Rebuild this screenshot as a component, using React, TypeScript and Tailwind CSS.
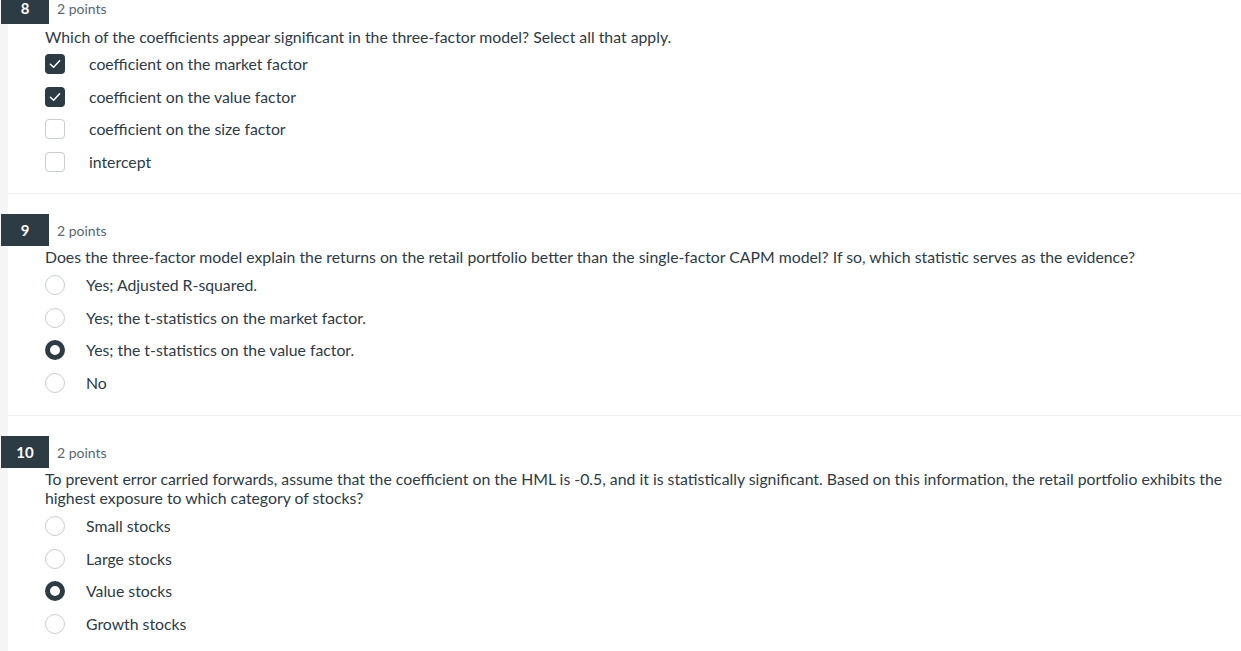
import React from "react"

type Opt = { label: string; checked?: boolean }

type Q = {
  num: string
  kind: "check" | "radio"
  text: string
  options: Opt[]
}

const questions: Q[] = [
  {
    num: "8",
    kind: "check",
    text: "Which of the coefficients appear significant in the three-factor model? Select all that apply.",
    options: [
      { label: "coefficient on the market factor", checked: true },
      { label: "coefficient on the value factor", checked: true },
      { label: "coefficient on the size factor" },
      { label: "intercept" },
    ],
  },
  {
    num: "9",
    kind: "radio",
    text: "Does the three-factor model explain the returns on the retail portfolio better than the single-factor CAPM model? If so, which statistic serves as the evidence?",
    options: [
      { label: "Yes; Adjusted R-squared." },
      { label: "Yes; the t-statistics on the market factor." },
      { label: "Yes; the t-statistics on the value factor.", checked: true },
      { label: "No" },
    ],
  },
  {
    num: "10",
    kind: "radio",
    text: "To prevent error carried forwards, assume that the coefficient on the HML is -0.5, and it is statistically significant. Based on this information, the retail portfolio exhibits the highest exposure to which category of stocks?",
    options: [
      { label: "Small stocks" },
      { label: "Large stocks" },
      { label: "Value stocks", checked: true },
      { label: "Growth stocks" },
    ],
  },
]

function Checkbox({ checked }: { checked?: boolean }) {
  if (checked) {
    return (
      <span className="flex h-5 w-5 shrink-0 items-center justify-center rounded-[4px] bg-[#2d3b45]">
        <svg width="14" height="14" viewBox="0 0 14 14" fill="none">
          <path d="M2.4 7.2 L5.6 10.2 L11.6 3.8" stroke="#fff" strokeWidth="1.5" strokeLinecap="round" strokeLinejoin="round" />
        </svg>
      </span>
    )
  }
  return <span className="h-5 w-5 shrink-0 rounded-[4px] border border-[#c7cdd1] bg-white" />
}

function Radio({ checked }: { checked?: boolean }) {
  if (checked) {
    return <span className="h-5 w-5 shrink-0 rounded-full border-[5px] border-[#2d3b45] bg-white" />
  }
  return <span className="h-5 w-5 shrink-0 rounded-full border border-[#c7cdd1] bg-white" />
}

function Question({ q, first }: { q: Q; first?: boolean }) {
  return (
    <div className={`border-b border-[#f0f0f0] ${first ? "-mt-[8px] pb-[15px]" : "pt-5 pb-4"}`}>
      <div className="flex h-8 items-center">
        <div className="-ml-[7px] flex h-8 w-12 items-center justify-center bg-[#2d3b45] text-[15px] font-bold text-white">
          {q.num}
        </div>
        <span className="ml-2 text-[14px] text-[#5b6770]">2 points</span>
      </div>
      <div className="pl-[37px] pr-3">
        <p className={`${first ? "mt-[3px]" : "mt-[1px]"} text-[15.8px] leading-[19px] text-[#2d3b45]`}>{q.text}</p>
        <div className={`${first ? "mt-[2px]" : "mt-[3px]"} flex flex-col`}>
          {q.options.map((o) => (
            <div key={o.label} className="flex h-[32.5px] items-center">
              {q.kind === "check" ? <Checkbox checked={o.checked} /> : <Radio checked={o.checked} />}
              <span className={`${q.kind === "check" ? "ml-6" : "ml-[21px]"} text-[15.8px] text-[#2d3b45]`}>{o.label}</span>
            </div>
          ))}
        </div>
      </div>
    </div>
  )
}

export default function App() {
  return (
    <div
      className="flex h-[651px] w-[1241px] overflow-hidden bg-[#f5f5f5]"
      style={{ fontFamily: "Lato, 'Noto Sans', sans-serif" }}
    >
      <div className="w-2 shrink-0 bg-[#f5f5f5]" />
      <div className="flex flex-1 flex-col">
        <div className="bg-white">
          {questions.map((q, i) => (
            <Question key={q.num} q={q} first={i === 0} />
          ))}
        </div>
        <div className="flex-1 bg-gradient-to-b from-[#fbfbfb] to-[#f3f3f3]" />
      </div>
    </div>
  )
}
